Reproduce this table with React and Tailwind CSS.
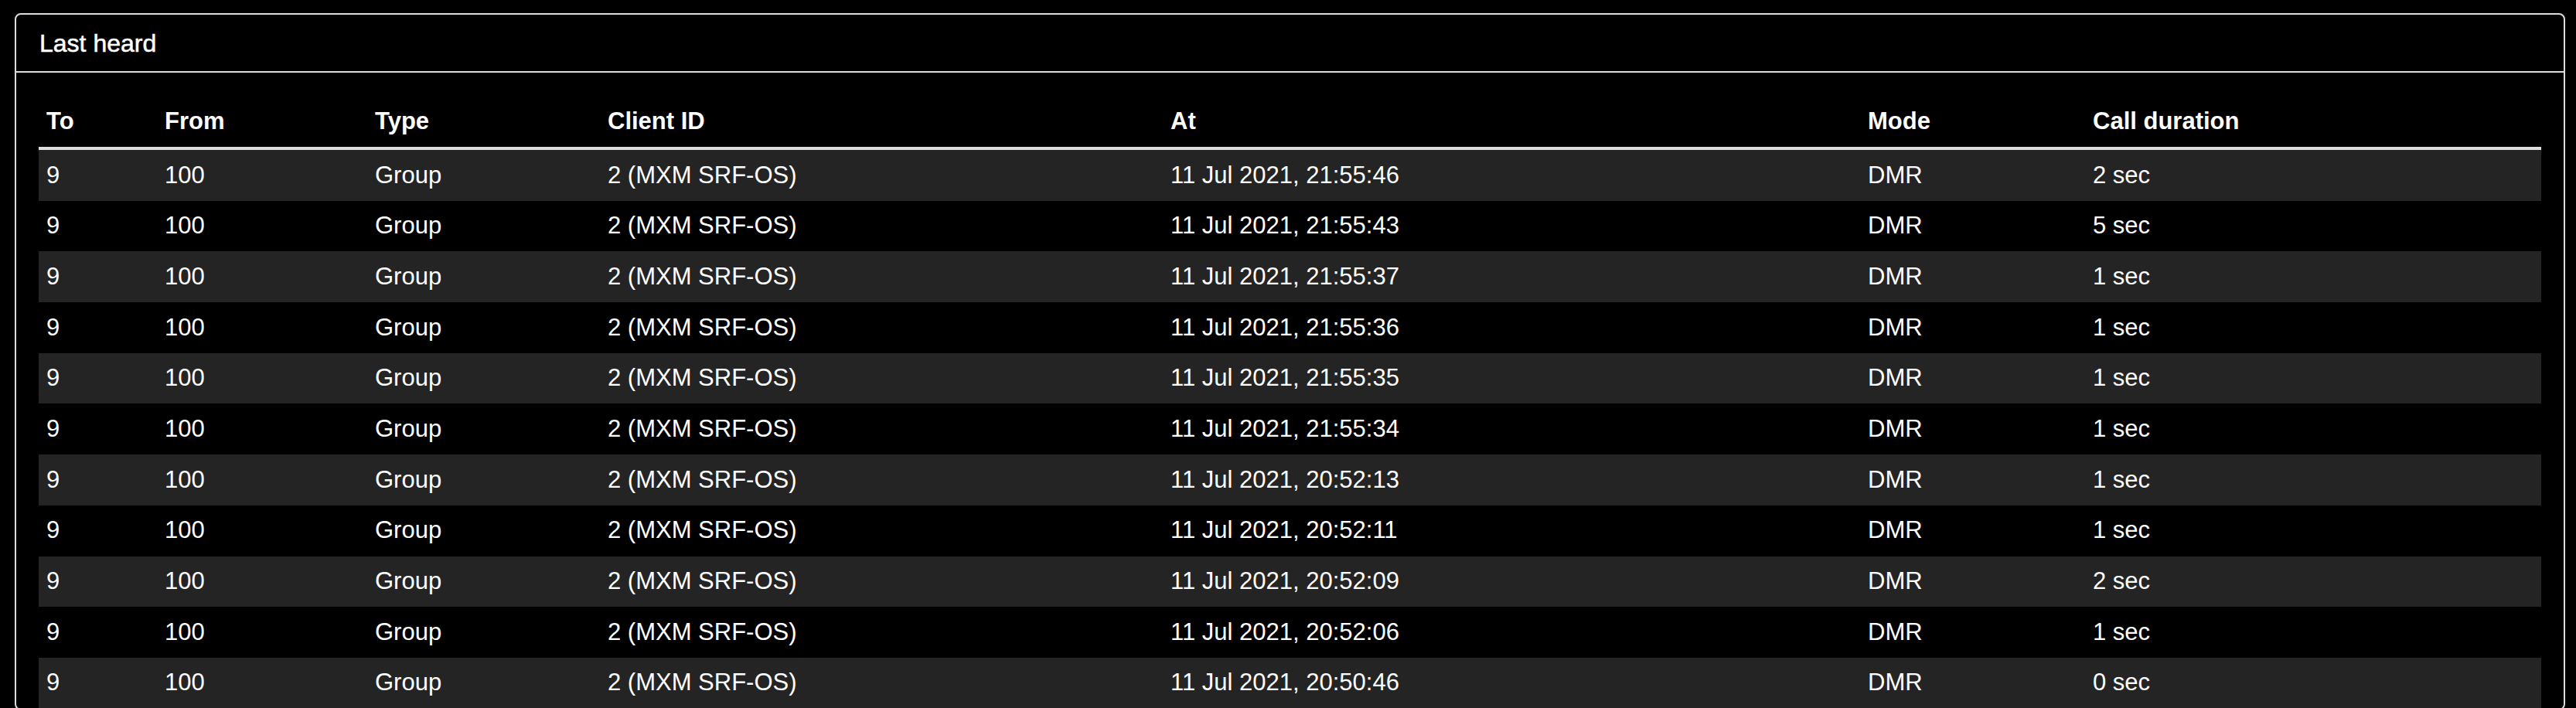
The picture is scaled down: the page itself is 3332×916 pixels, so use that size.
import React from "react";

const rows = [
  ["21:55:46", "2"],
  ["21:55:43", "5"],
  ["21:55:37", "1"],
  ["21:55:36", "1"],
  ["21:55:35", "1"],
  ["21:55:34", "1"],
  ["20:52:13", "1"],
  ["20:52:11", "1"],
  ["20:52:09", "2"],
  ["20:52:06", "1"],
  ["20:50:46", "0"],
];

const headers = ["To", "From", "Type", "Client ID", "At", "Mode", "Call duration"];

export default function App() {
  return (
    <div className="min-h-screen bg-black pt-[17px] pb-[40px] text-white font-['Liberation_Sans',Arial,sans-serif]">
      <div className="ml-[19px] w-[3299px] rounded-[8px] border-2 border-[#dcdcdc]">
        <div className="flex h-[75px] items-center border-b-2 border-[#dcdcdc] px-[30px] text-[32px] [-webkit-text-stroke:0.5px_white]">
          Last heard
        </div>
        <div className="px-[29px] pt-[30px]">
          <div className="grid h-[70px] grid-cols-[153px_272px_301px_728px_902px_291px_589px] items-center border-b-4 border-[#dedede] text-[31px] font-bold">
            {headers.map((h) => (
              <div key={h} className="pl-[10px]">
                {h}
              </div>
            ))}
          </div>
          {rows.map(([time, dur], i) => (
            <div
              key={i}
              className={
                "grid h-[65.7px] grid-cols-[153px_272px_301px_728px_902px_291px_589px] items-center text-[31px] " +
                (i % 2 === 0 ? "bg-[#242424]" : "bg-black")
              }
            >
              <div className="pl-[10px]">9</div>
              <div className="pl-[10px]">100</div>
              <div className="pl-[10px]">Group</div>
              <div className="pl-[10px]">2 (MXM SRF-OS)</div>
              <div className="pl-[10px]">11 Jul 2021, {time}</div>
              <div className="pl-[10px]">DMR</div>
              <div className="pl-[10px]">{dur} sec</div>
            </div>
          ))}
        </div>
      </div>
    </div>
  );
}
